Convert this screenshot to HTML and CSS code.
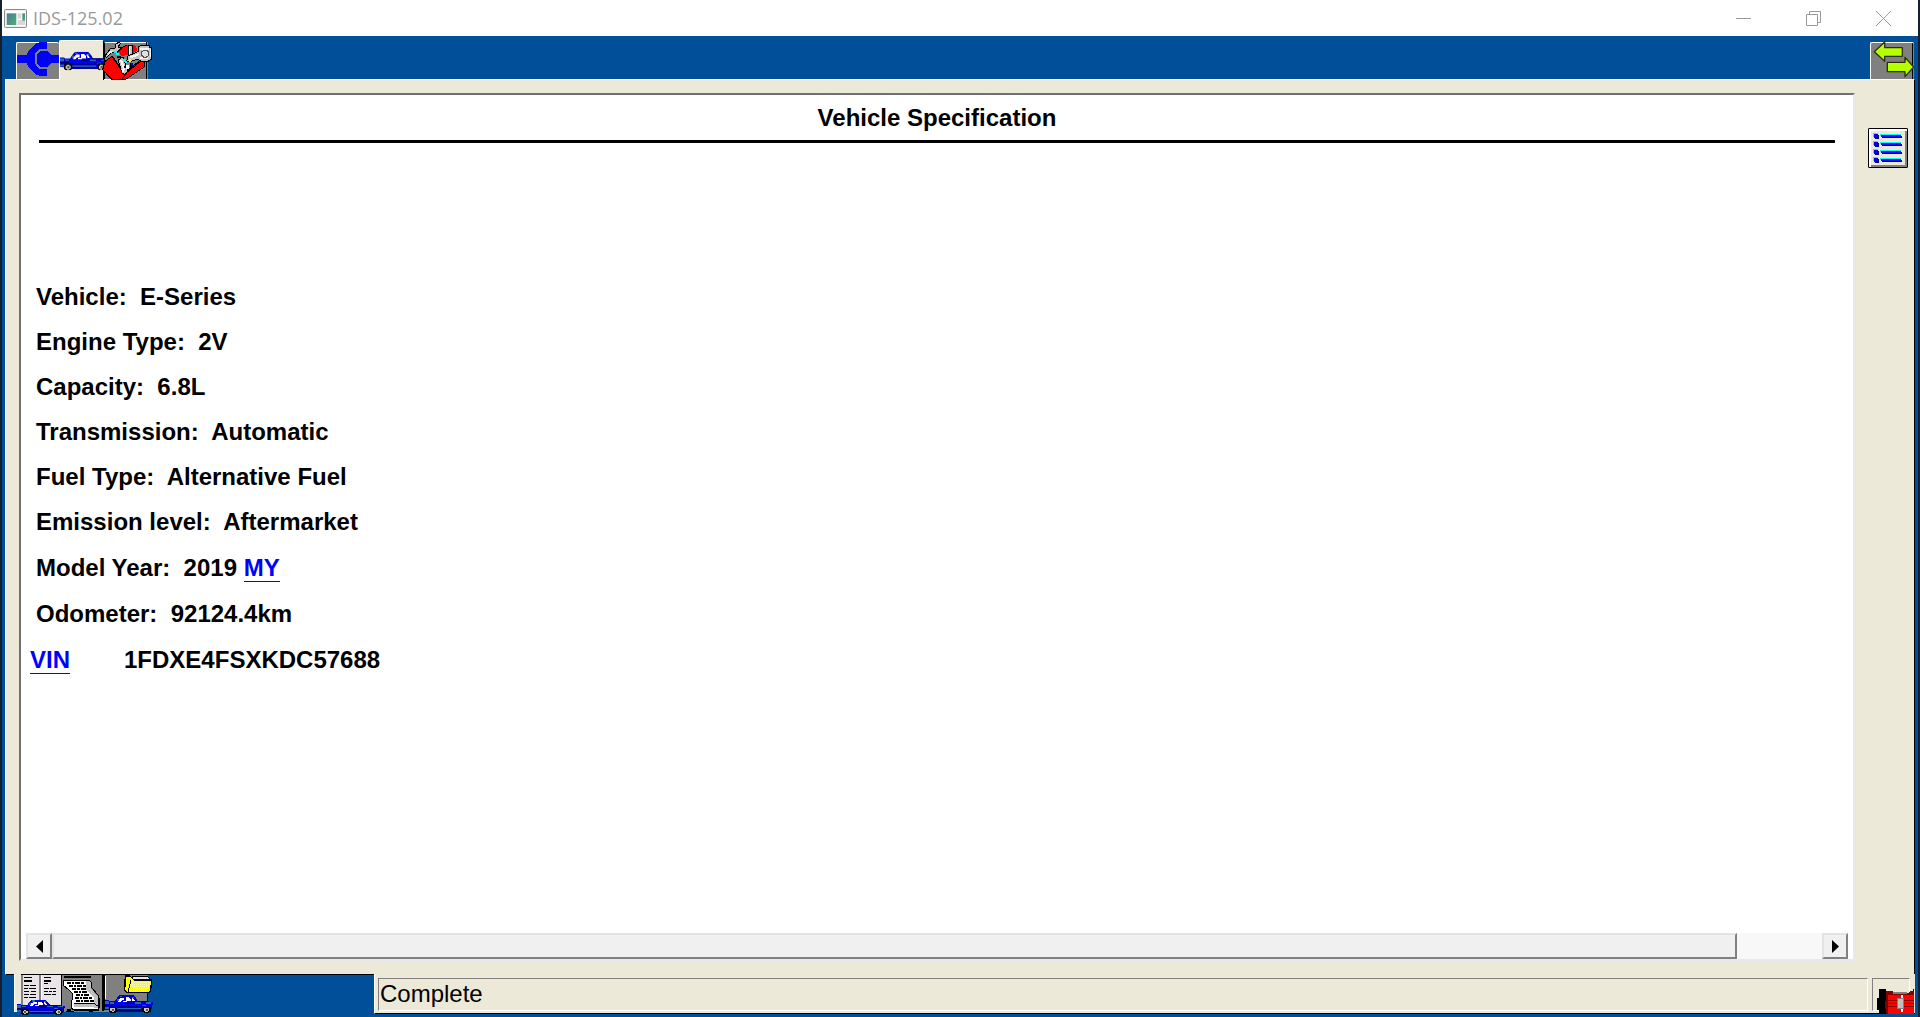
FILE: index.html
```html
<!DOCTYPE html>
<html lang="en">
<head>
<meta charset="utf-8">
<title>IDS-125.02</title>
<link rel="stylesheet" href="styles.css">
</head>
<body>
<svg class="defs" aria-hidden="true">
  <symbol id="car" viewBox="0 0 144 57" preserveAspectRatio="none">
    <path fill="#0000c8" d="M0 18h12l3 3h15l6-9 6-9 6-3h36l6 6 6 9 3 6h33l6 3h6v6l-3 3v12h-6l-3 5-18 3H42L6 47H0z"/>
    <path fill="#2468b0" d="M0 21h12v9H0zM0 39h14v6H0zM36 42h72v4H36zM36 12h6v9h-6zM45 3h8v4h-8zM82 6h6v5h-6zM90 24h18v5H90zM124 24h14v5h-14zM15 24h12v4H15zM111 33h12v3h-12z"/>
    <path fill="#000080" d="M0 31h27v4H0zM36 36h60v4H36zM64 25h24v4H64zM36 48h72v4H36zM96 20h34v3H96z"/>
    <path fill="#0000ff" d="M30 24h33v9H30zM54 1h24v4H54zM66 30h36v5H66zM110 28h24v4h-24z"/>
    <path fill="#fff" d="M49 9h10v9h-8l-5 5h-7l4-8zM63 7h9l6 6v8H63zM79 9h4l7 10h-7zM54 19h12v4H54z"/>
    <path fill="#000" d="M13 37h20l4 6v9l-5 5H17l-5-5zM113 37h19l5 6v9l-5 5h-14l-6-5z"/>
    <path fill="#c8c8b8" d="M20 40h8v3h4v9h-4v3h-7v-3h-4v-9h3zM120 40h8v3h4v9h-4v3h-7v-3h-4v-9h3z"/>
    <path fill="#505050" d="M22 44h6v7h-6zM122 44h6v7h-6z"/>
  </symbol>
</svg>

<header class="titlebar">
  <svg class="app-icon" viewBox="12 24 69 57" aria-hidden="true">
    <defs><linearGradient id="g" x1="0" y1="0" x2="1" y2="1"><stop offset="0" stop-color="#4a7a9a"/><stop offset="1" stop-color="#50b070"/></linearGradient></defs>
    <rect x="13.500" y="25.500" width="66" height="54" rx="3" fill="#eee" stroke="#8a8a8a" stroke-width="3"/>
    <path fill="#fff" d="M17 30h59v45H17z"/>
    <path fill="url(#g)" d="M20 37h29v35H20z"/>
    <path fill="#d8d8d8" d="M53 37h11v16H53zM53 57h22v15H53z"/>
    <path fill="url(#g)" d="M67 37h8v22h-8z"/>
  </svg>
  <h1 class="app-title">IDS-125.02</h1>
  <div class="window-controls">
    <button type="button" aria-label="Minimize"><svg viewBox="0 0 15 15"><path d="M0 7.500h15"/></svg></button>
    <button type="button" aria-label="Restore"><svg viewBox="0 0 15 15"><path d="M.5 3.500h11v11H.5zM3.500 3.500v-3h11v11h-3"/></svg></button>
    <button type="button" aria-label="Close"><svg viewBox="0 0 15 15"><path d="M0 0l15 15M15 0L0 15"/></svg></button>
  </div>
</header>

<nav class="tabs" aria-label="Sections">
  <button type="button" class="tab first" aria-label="Connection">
    <svg viewBox="48 126 129 111" shape-rendering="crispEdges">
      <path fill="#00f" d="M51 165h30l3-9 6-9 9-9 12-9 12-3h18v21h-15l-12 6-9 12v24l9 12 12 6h15v21h-18l-12-3-12-9-9-9-6-9-3-9H51z"/>
      <path fill="#00f" d="M120 153h24l9 12h24v24h-24l-9 12h-24l-9-9v-30z"/>
      <path fill="none" stroke="#808080" stroke-width="4" d="M146 149h-26l-14 15v26l14 15h26"/>
    </svg>
  </button>
  <button type="button" class="tab active" aria-label="Vehicle">
    <svg viewBox="177 120 135 120"><use href="#car" x="180" y="155" width="144" height="56"/></svg>
  </button>
  <button type="button" class="tab" aria-label="Toolbox">
    <svg viewBox="312 126 129 111" shape-rendering="crispEdges">
      <path fill="#000" d="M439 126h3v111h-3z"/>
      <path fill="#f00" stroke="#000" stroke-width="3" d="M316 183l21-14 36 50 60-48v30l-54 36h-45l-26-28z"/>
      <path fill="#f00" d="M350 150l30-15h24l9 15-40 28z"/>
      <path fill="#808080" d="M345 176l27 38 46-38-28-14z"/>
      <path fill="none" stroke="#000" stroke-width="3" d="M337 171l36 52 60-48M366 237l10-14M350 151l30-15"/>
      <path fill="#c4c4c4" stroke="#000" stroke-width="3" d="M315 168l15-21 15-3 3-12 9-6 4 5-7 10 10 3-13 13-18 2-14 14zM384 135h12v30h-12zM354 180l15-9 15 42-9 12-9-6z"/>
      <path fill="#c4c4c4" stroke="#000" stroke-width="3" d="M384 168l30-13v-13l9-6h24v5h8v36l-9 6h-24l-9-6-24 9-9-3z"/>
      <path fill="#f4f4f4" d="M321 162l12-9 6 2-14 10zM387 138h4v24h-4zM360 182l6-3 10 30-5 4zM390 169l26-9v6l-24 9zM420 143h27v6h-27zM420 171h24v6h-24zM450 148h3v22h-3z"/>
      <path fill="#e0e0e0" stroke="#505050" stroke-width="3" d="M431 151h9l6 5v10l-6 5h-9l-6-5v-10z"/>
      <path fill="#0ff" d="M342 153h9v6h6v5h-9v-5h-6zM369 177h8v6h4v7h-6v-4h-6z"/>
      <path fill="#000" d="M350 168h12v5h-12zM372 198h9v6h-9zM390 190h9v12h-9z"/>
      <path fill="#fff" d="M378 194h9v12h-9zM366 206h6v9h-6z"/>
      <path fill="#ff0" d="M386 176h6v10h-6z"/><path fill="#00f" d="M393 190h6v8h-6z"/>
    </svg>
  </button>
  <button type="button" class="tab end" aria-label="Switch">
    <svg viewBox="450 126 129 111">
      <path fill="#000" d="M576 130h3v107h-3z"/>
      <g fill="#b4ff00" stroke="#303000" stroke-width="4" stroke-linejoin="round"><path d="M463 155l31-29v17h53v26h-53v15z"/><path d="M581 201l-26-29v15h-53v28h53v15z"/></g>
    </svg>
  </button>
</nav>

<main class="panel">
  <section class="sheet">
    <h2>Vehicle Specification</h2>
    <div class="specs">
      <p>Vehicle:&nbsp; E-Series</p>
      <p>Engine Type:&nbsp; 2V</p>
      <p>Capacity:&nbsp; 6.8L</p>
      <p>Transmission:&nbsp; Automatic</p>
      <p>Fuel Type:&nbsp; Alternative Fuel</p>
      <p>Emission level:&nbsp; Aftermarket</p>
      <div class="tall">
        <p>Model Year:&nbsp; 2019 <a href="#my">MY</a></p>
        <p>Odometer:&nbsp; 92124.4km</p>
        <p class="vin"><a href="#vin">VIN</a><span>1FDXE4FSXKDC57688</span></p>
      </div>
    </div>
    <div class="scrollbar">
      <button type="button" aria-label="Scroll left"><svg viewBox="0 0 7 13"><path d="M7 0v13L0 6.500z"/></svg></button>
      <div class="thumb"></div>
      <div class="track"></div>
      <button type="button" aria-label="Scroll right"><svg viewBox="0 0 7 13"><path d="M0 0v13l7-6.500z"/></svg></button>
    </div>
  </section>
  <aside class="tools">
    <button type="button" class="list-button" aria-label="Menu">
      <svg viewBox="444 384 120 120" shape-rendering="crispEdges">
        <path fill="#0ff" d="M459 399h15v12h-15zM480 402h64v6h-64zM459 423h15v12h-15zM480 426h64v6h-64zM459 447h15v12h-15zM480 450h64v6h-64zM459 471h15v12h-15zM480 474h64v6h-64z"/>
        <path fill="#000080" d="M464 404h13v13h-13zM485 408h61v6h-61zM464 428h13v13h-13zM485 432h61v6h-61zM464 452h13v13h-13zM485 456h61v6h-61zM464 476h13v13h-13zM485 480h61v6h-61z"/>
        <path fill="#00f" d="M462 402h12v12h-12zM483 405h60v6h-60zM462 426h12v12h-12zM483 429h60v6h-60zM462 450h12v12h-12zM483 453h60v6h-60zM462 474h12v12h-12zM483 477h60v6h-60z"/>
      </svg>
    </button>
  </aside>
</main>

<footer class="bottom">
  <div class="dock">
    <button type="button" class="dock-item report" aria-label="Vehicle report">
      <svg viewBox="60 165 120 111" shape-rendering="crispEdges">
        <path fill="#e8e4e8" d="M60 165h120v111H60z"/>
        <path fill="#808080" d="M60 165h6v111h-6zM114 165h6v80h-6z"/><path fill="#fff" d="M120 165h3v80h-3z"/>
        <path fill="#000" d="M69 171h24v4H69zM69 181h24v6H69zM69 194h15v3H69zM87 194h18v3H87zM69 204h12v3H69zM84 204h21v3H84zM69 213h15v3H69zM90 213h15v3H90zM69 222h15v3H69zM87 222h18v3H87zM69 231h12v3H69zM84 231h21v3H84zM129 171h21v4h-21zM129 181h21v6h-21zM129 190h12v3h-12zM129 204h15v3h-15zM147 204h18v3h-18zM129 213h12v3h-12zM144 213h9v3h-9zM156 213h9v3h-9zM129 222h21v3h-21zM153 222h12v3h-12z"/>
        <use href="#car" x="48" y="239" width="144" height="45"/>
      </svg>
    </button>
    <button type="button" class="dock-item printout" aria-label="Printout">
      <svg viewBox="180 165 126 111" shape-rendering="crispEdges">
        <path fill="#000" d="M180 165h3v105h-3zM189 168h81v6h-81zM303 165h5v107h-5z"/>
        <path fill="#fff" stroke="#000" stroke-width="3" d="M186 180h66l9 9v12l6 15 18 12 9 6v30l-6 6h-69l-9-6v-18l6-12-3-15-9-9-18-15z"/>
        <path fill="#c0c0c0" d="M256 180l13 6v18l21 25v35h-12v-32l-22-22zM218 253h66v8h-66z"/>
        <path fill="none" stroke="#000" stroke-width="3" d="M252 180h12l6 6v15l21 24v42M218 250h60l12 8M212 267h76"/>
        <path fill="none" stroke="#000" stroke-width="5" stroke-dasharray="12 3 7 3 15 3" d="M198 188h52M204 197h50M214 206h42M218 215h42M225 224h43M222 233h52M225 242h54"/>
        <path fill="#000" d="M198 268h12v4h9v4h-24zM270 268h24v5h-18v3h-12z"/>
      </svg>
    </button>
    <button type="button" class="dock-item files" aria-label="Vehicle files">
      <svg viewBox="309 165 132 111" shape-rendering="crispEdges">
        <path fill="#000" d="M309 165h3v106h-3zM438 219h3v52h-3z"/><path fill="#fff" d="M312 168h3v68h-3z"/>
        <path fill="#e8e4e8" stroke="#000" stroke-width="3" d="M390 177l6-9h42l12 12z"/>
        <path fill="#ff0" stroke="#000" stroke-width="4" d="M373 168h14l12 12h53l-3 30-4 8h-66l-8-6z"/>
        <path fill="none" stroke="#fff" stroke-width="2" stroke-dasharray="3 3" d="M388 186h60M388 192h57M388 198h57M385 204h60M385 210h57"/>
        <path fill="none" stroke="#000" stroke-width="3" d="M390 181l-9 35"/>
        <use href="#car" x="311" y="224" width="145" height="55"/>
      </svg>
    </button>
  </div>
  <div class="status">
    <div class="cell message" role="status">Complete</div>
    <div class="cell device">
      <svg viewBox="471 207 111 75" shape-rendering="crispEdges" aria-hidden="true">
        <path fill="#000" d="M480 207h18v72h-21v-9h-6v-36h6v-27zM579 207h3v12h-3z"/>
        <path fill="#800000" d="M498 213h18l6 6h42l6-6h12v12h-84zM495 243h8v24h-8zM498 222h6v60h-6z"/>
        <path fill="red" d="M504 225h78v57h-78z"/>
        <path fill="#808080" d="M519 216h42v6h-42z"/>
        <path fill="#800000" d="M504 240h78v3h-78zM504 249h78v3h-78zM504 258h78v3h-78z"/>
        <path fill="#fff" d="M543 225h6v51h-6z"/>
        <path fill="#c0c0c0" stroke="#808080" stroke-width="3" d="M532 235h18v30h-18z"/>
      </svg>
    </div>
  </div>
</footer>
</body>
</html>
```
FILE: styles.css
```css
* {
  box-sizing: border-box;
}

body {
  display: flex;
  flex-direction: column;
  min-height: 100vh;
  margin: 0;
  border-left: 2px solid #14202e;
  border-right: 2px solid #14202e;
  background: #004f98;
  color: #000;
  font: 24px/32px "Liberation Sans", Arial, sans-serif;
}

button {
  display: block;
  margin: 0;
  padding: 0;
  border: 0;
  border-radius: 0;
  background: none;
  font: inherit;
}

svg {
  display: block;
  overflow: visible;
}

.defs {
  position: absolute;
  width: 0;
  height: 0;
}

/* Title bar */
.titlebar {
  display: flex;
  align-items: center;
  gap: 6px;
  height: 36px;
  padding-left: 2px;
  background: #fff;
}

.app-icon {
  width: 23px;
  height: 19px;
}

.app-title {
  flex: 1;
  margin: 0;
  color: #999;
  font: 400 18px/24px "Open Sans", "Segoe UI", sans-serif;
}

.window-controls {
  display: flex;
}

.window-controls button {
  display: grid;
  place-items: center;
  width: 70px;
  height: 36px;
}

.window-controls svg {
  width: 15px;
  height: 15px;
  fill: none;
  stroke: #999;
}

/* Section tabs */
.tabs {
  display: flex;
  align-items: flex-end;
  height: 43px;
  padding: 0 4px 0 14px;
}

.tab {
  position: relative;
  width: 44px;
  height: 37px;
  border-top: 1px solid #fff;
  border-left: 1px solid #fff;
  border-radius: 2px 2px 0 0;
  background: #808080;
}

.tab svg {
  width: 43px;
  height: 37px;
  margin: -1px 0 0 -1px;
}

.tab.first {
  width: 43px;
}

.tab.active {
  z-index: 1;
  width: 45px;
  height: 40px;
  margin-bottom: -1px;
  border-right: 1px solid #000;
  background: #ece9d8;
}

.tab.active svg {
  width: 45px;
  height: 40px;
}

.tab.active + .tab {
  z-index: 2;
  border-left-color: #000;
}

.tab.end {
  margin-left: auto;
}

/* Main panel */
.panel {
  display: flex;
  flex: 1;
  margin: 0 3px;
  padding: 13px 0 13px 13px;
  border: 1px solid;
  border-color: #fff #000 #000 #fff;
  background: #ece9d8;
}

.sheet {
  display: flex;
  flex: 1;
  flex-direction: column;
  padding: 0 5px;
  border: 2px solid;
  border-color: #707070 #e8e8e8 #e8e8e8 #707070;
  background: #fff;
}

.sheet h2 {
  margin: 0 13px;
  padding: 7px 0 6px;
  border-bottom: 3px solid #000;
  font-size: 24px;
  line-height: 32px;
  text-align: center;
}

.specs {
  flex: 1;
  padding: 131px 0 24px 10px;
  font-weight: 700;
}

.specs p {
  margin: 0;
  line-height: 45px;
}

.specs .tall {
  padding-top: 1px;
}

.tall p {
  line-height: 46px;
}

.specs a {
  border-bottom: 1px solid #00f;
  color: #00f;
  text-decoration: none;
}

.specs .vin {
  display: flex;
  align-items: center;
  gap: 54px;
  margin-left: -6px;
}

.vin a {
  line-height: 27px;
}

.scrollbar {
  display: flex;
  height: 26px;
}

.scrollbar button,
.thumb {
  border: 2px solid;
  border-color: #e3e3e3 #808080 #808080 #e3e3e3;
  background: #f0f0f0;
}

.scrollbar button {
  display: grid;
  place-items: center;
  width: 26px;
}

.scrollbar svg {
  width: 7px;
  height: 13px;
}

.thumb {
  flex: 1685;
}

.track {
  flex: 85;
  background: #f8f8f8;
}

.tools {
  width: 59px;
  padding: 35px 6px 0 13px;
}

.list-button {
  width: 40px;
  height: 40px;
  border: 1px solid #000;
  border-radius: 1px;
  background: #ece9d8;
  box-shadow: inset 2px 2px #fff, inset -2px -2px #808080;
}

.list-button svg {
  width: 40px;
  height: 40px;
  margin: -1px;
}

/* Bottom bar */
.bottom {
  display: flex;
  height: 42px;
  margin: 0 3px;
}

.dock {
  display: flex;
  width: 369px;
  height: 37px;
  padding-left: 15px;
}

.dock::before {
  width: 6px;
  margin: -1px 0 0 -6px;
  border-left: 1px solid #fff;
  background: #ece9d8;
  content: "";
}

.dock-item {
  height: 37px;
  background: #808080;
}

.dock-item svg {
  height: 37px;
}

.report {
  z-index: 1;
  width: 40px;
}

.report svg {
  width: 40px;
}

.printout {
  width: 43px;
}

.printout svg {
  width: 42px;
}

.files,
.files svg {
  width: 44px;
}

.status {
  display: flex;
  flex: 1;
  gap: 4px;
  height: 40px;
  margin-top: -1px;
  padding: 4px 5px 2px 3px;
  border-bottom: 1px solid #000;
  border-left: 1px solid #fff;
  background: #ece9d8;
}

.cell {
  height: 33px;
  border: 1px solid;
  border-color: #808080 #fff #fff #808080;
}

.message {
  flex: 1;
  padding-left: 1px;
  line-height: 30px;
}

.device {
  width: 38px;
  padding: 10px 0 0 4px;
}

.device svg {
  width: 37px;
  height: 25px;
}
```
